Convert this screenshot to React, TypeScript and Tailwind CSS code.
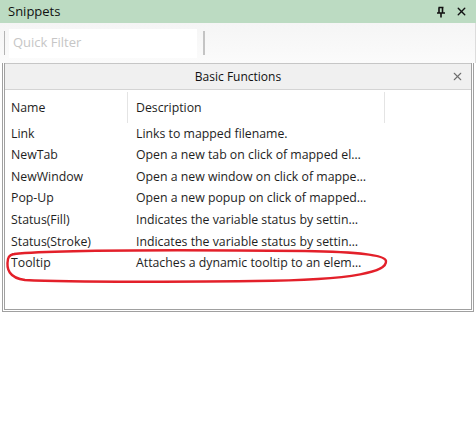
import { X } from 'lucide-react';

const ROWS = [
  { name: 'Link', desc: 'Links to mapped filename.' },
  { name: 'NewTab', desc: 'Open a new tab on click of mapped el…' },
  { name: 'NewWindow', desc: 'Open a new window on click of mappe…' },
  { name: 'Pop-Up', desc: 'Open a new popup on click of mapped…' },
  { name: 'Status(Fill)', desc: 'Indicates the variable status by settin…' },
  { name: 'Status(Stroke)', desc: 'Indicates the variable status by settin…' },
  { name: 'Tooltip', desc: 'Attaches a dynamic tooltip to an elem…' },
];

const PinIcon = () => (
  <svg width="10" height="12" viewBox="0 0 10 12" className="block">
    <path d="M2.5 1.5h5M3 1.5v5.5M6.5 1.5v5.5M1 7h8M5 7v4.5" stroke="#111" strokeWidth="1.6" fill="none" />
  </svg>
);

export default function App() {
  return (
    <div className="relative w-[476px] h-[428px] bg-white text-[12.3px] text-[#1e1e1e] font-['Open_Sans',sans-serif] overflow-hidden">
      {/* Title bar */}
      <div className="flex h-[23px] items-center justify-between bg-[#bcdbc2] pl-[8px] pr-[8px]">
        <span className="text-[13px] leading-none text-[#111]">Snippets</span>
        <div className="flex items-center gap-[9px]">
          <PinIcon />
          <X className="h-[13px] w-[13px] text-[#111]" strokeWidth={2.6} />
        </div>
      </div>

      {/* Toolbar */}
      <div className="flex h-[40px] items-center bg-gradient-to-b from-[#f5f5f5] to-[#fbfbfb] pl-[4px] border-r border-[#dcdcdc]">
        <div className="h-[24px] w-[1px] bg-[#b4b4b4]" />
        <div className="ml-[4px] flex h-[29px] w-[188px] items-center bg-white pl-[4px] text-[13px] text-[#c6c6c6]">
          Quick Filter
        </div>
        <div className="ml-[6px] h-[24px] w-[2px] bg-[#c4c4c4]" />
      </div>

      {/* Panel */}
      <div className="ml-[2px] w-[472px] border-x-[3px] border-b-[3px] border-double border-[#a0a0a0]">
        <div className="relative flex h-[26px] items-center justify-center border-t border-[#c6c6c6] bg-[#f0f0f0] text-[12px] text-[#111]">
          Basic Functions
          <X className="absolute right-[7px] top-[6px] h-[13px] w-[13px] text-[#6e6e6e]" strokeWidth={2} />
        </div>
        <div className="relative h-[220px] border-t border-[#d4d4d4] bg-white">
          <div className="flex h-[33px] items-stretch pt-[2px]">
            <div className="flex w-[123px] items-center border-r border-[#e4e4e4] pl-[6px] pt-[2px]">Name</div>
            <div className="flex w-[257px] items-center border-r border-[#e4e4e4] pl-[8px] pt-[2px]">Description</div>
          </div>
          {ROWS.map(r => (
            <div key={r.name} className="flex h-[21.6px] items-center">
              <div className="w-[124px] pl-[6px]">{r.name}</div>
              <div className="whitespace-nowrap pl-[7px]">{r.desc}</div>
            </div>
          ))}
          <svg className="absolute left-[0px] top-[157px]" width="390" height="38" viewBox="0 0 390 38">
            <path
              d="M9 7 C 60 2, 200 3, 300 4 C 355 5, 380 8, 381 14 C 382 24, 355 33, 250 34 C 150 35, 60 35, 20 33 C 4 31, 1 22, 3 12 C 4 8, 7 7, 11 7"
              stroke="#e3202a"
              strokeWidth="2.4"
              fill="none"
            />
          </svg>
        </div>
      </div>
    </div>
  );
}
